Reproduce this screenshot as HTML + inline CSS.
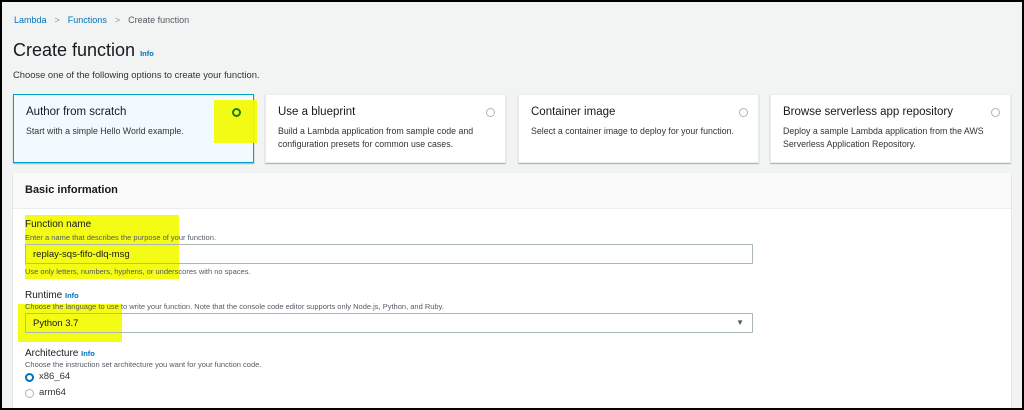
<!DOCTYPE html><html><head><style>
*{margin:0;padding:0;box-sizing:border-box}
body{width:1024px;height:410px;overflow:hidden;background:#000;font-family:"Liberation Sans",sans-serif;color:#16191f;position:relative}
.page{position:absolute;left:2px;top:2px;width:1020px;height:406px;background:#f2f3f3;overflow:hidden}
.a{position:absolute;white-space:nowrap}
.card{position:absolute;top:92px;height:69px;background:#fff;box-shadow:0 1px 1px rgba(0,0,0,.3);border:1px solid #eaeded}
.card .t{position:absolute;left:12px;top:11px;font-size:11.5px}
.card .d{position:absolute;left:12px;top:30px;font-size:8.8px;line-height:13px;color:#333}
.card .r{position:absolute;right:10px;top:13px;width:9px;height:9px;border:1px solid #aab7b8;border-radius:50%}
.hl{position:absolute;background:#f3fb00;opacity:.92}
.blue{color:#0073bb}
.info{color:#0073bb;font-size:7.5px;font-weight:bold}
.in{position:absolute;left:23px;width:728px;height:20px;border:1px solid #aab7b8;background:#fff;border-radius:1px}
.lab{font-size:10px}
.hint{font-size:7.5px;color:#545b64}
</style></head><body><div class="page">
<div class="a" style="left:12px;top:13px;font-size:9px"><span class="blue">Lambda</span><span style="color:#879596;margin:0 8px">&gt;</span><span class="blue">Functions</span><span style="color:#879596;margin:0 8px">&gt;</span><span style="color:#545b64">Create function</span></div>
<div class="a" style="left:11px;top:38px;font-size:18px">Create function <span class="info">Info</span></div>
<div class="a" style="left:11px;top:67px;font-size:9.4px;color:#333">Choose one of the following options to create your function.</div>
<div class="card" style="left:11px;width:241px;background:#f1faff;border:1px solid #00a1c9"><div class="t">Author from scratch</div><div class="d">Start with a simple Hello World example.</div></div>
<div class="hl" style="left:212px;top:98px;width:43px;height:43px"></div>
<div class="a" style="left:230px;top:106px;width:9px;height:9px;border:2.5px solid #1d8102;border-radius:50%"></div>
<div class="card" style="left:263px;width:241px"><div class="t">Use a blueprint</div><div class="d">Build a Lambda application from sample code and<br>configuration presets for common use cases.</div><div class="r"></div></div>
<div class="card" style="left:516px;width:241px"><div class="t">Container image</div><div class="d">Select a container image to deploy for your function.</div><div class="r"></div></div>
<div class="card" style="left:768px;width:241px"><div class="t">Browse serverless app repository</div><div class="d">Deploy a sample Lambda application from the AWS<br>Serverless Application Repository.</div><div class="r"></div></div>
<div class="a" style="left:11px;top:171px;width:998px;height:240px;background:#fff;box-shadow:0 1px 1px rgba(0,0,0,.3)"></div>
<div class="a" style="left:11px;top:171px;width:998px;height:36px;background:#fafafa;border-bottom:1px solid #eaeded"></div>
<div class="a" style="left:23px;top:182px;font-size:11px;font-weight:bold">Basic information</div>
<div class="hl" style="left:23px;top:213px;width:154px;height:64px"></div>
<div class="a lab" style="left:23px;top:217px">Function name</div>
<div class="a hint" style="left:23px;top:231px">Enter a name that describes the purpose of your function.</div>
<div class="in" style="top:242px;background:transparent"><span class="a" style="left:7px;top:4px;font-size:9.5px">replay-sqs-fifo-dlq-msg</span></div>
<div class="a hint" style="left:23px;top:265px">Use only letters, numbers, hyphens, or underscores with no spaces.</div>
<div class="a lab" style="left:23px;top:288px">Runtime <span class="info">Info</span></div>
<div class="hl" style="left:16px;top:302px;width:104px;height:38px"></div>
<div class="a hint" style="left:23px;top:300px">Choose the language to use to write your function. Note that the console code editor supports only Node.js, Python, and Ruby.</div>
<div class="in" style="top:311px;background:transparent"><span class="a" style="left:7px;top:4px;font-size:9.5px">Python 3.7</span><span class="a" style="right:8px;top:4px;font-size:8px;color:#545b64">▼</span></div>
<div class="a lab" style="left:23px;top:346px">Architecture <span class="info">Info</span></div>
<div class="a hint" style="left:23px;top:358px">Choose the instruction set architecture you want for your function code.</div>
<div class="a" style="left:23px;top:371px;width:9px;height:9px;border:2.5px solid #0073bb;border-radius:50%"></div>
<div class="a" style="left:37px;top:369px;font-size:9.5px;color:#333">x86_64</div>
<div class="a" style="left:23px;top:387px;width:9px;height:9px;border:1px solid #aab7b8;border-radius:50%"></div>
<div class="a" style="left:37px;top:385px;font-size:9.5px;color:#333">arm64</div>
</div></body></html>
